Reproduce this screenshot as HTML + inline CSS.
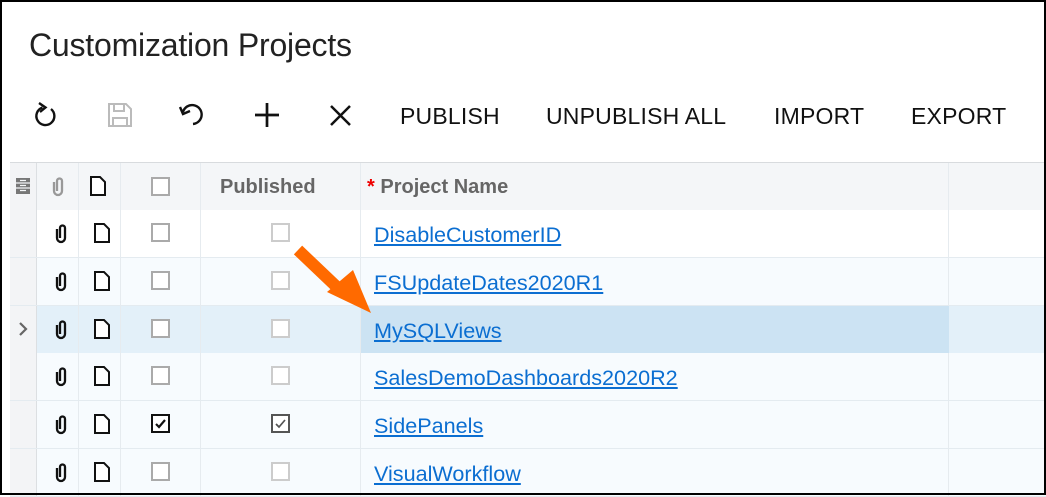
<!DOCTYPE html>
<html><head><style>
body{margin:0;width:1046px;height:495px;overflow:hidden;background:#fff;font-family:"Liberation Sans",sans-serif;position:relative}
.frame{position:absolute;left:0;top:0;width:1042px;height:491px;border:2px solid #000;z-index:5;pointer-events:none}
h1{position:absolute;left:29px;top:27px;margin:0;font-weight:normal;font-size:32px;color:#222;letter-spacing:-0.2px}
.tb{position:absolute;top:103px;font-size:23px;color:#111;letter-spacing:0.2px}
.ic{position:absolute;top:100px}
.grid{position:absolute;left:10px;top:162px;width:1036px}
.row{position:absolute;left:0;width:1036px;height:47px;border-bottom:1px solid #e4ebf0;background:#f7fbfe}
.hdr{background:#f4f6f8;border-top:1px solid #d8dbde;border-bottom:1px solid #d8dbde;height:47px}
.vl{position:absolute;top:0;width:1px;height:100%;background:#e6ebef}
.cb{position:absolute;width:19px;height:19px;border:2px solid #aaa;box-sizing:border-box;background:#fff}
a{position:absolute;left:364px;top:12px;font-size:21.6px;color:#0b6ed1;text-decoration:underline}
.lg{position:absolute;left:0;top:0;width:26px;height:100%;background:#f3f4f6;border-right:1px solid #dcdfe2}
</style></head><body>
<div class="frame"></div>
<h1>Customization Projects</h1>
<svg class="ic" style="left:33px" width="28" height="30" viewBox="0 0 28 30"><path d="M18 9 A9 9 0 1 1 9.5 7.5" fill="none" stroke="#111" stroke-width="2.4"/><path d="M6 3 L12.5 7.5 L7 12" fill="none" stroke="#111" stroke-width="2.4"/></svg>
<svg class="ic" style="left:106px" width="28" height="30" viewBox="0 0 28 30"><path d="M3 4h17l5 5v17H3z M8 4v7h10V4 M7 26v-8h14v8" fill="none" stroke="#bbb" stroke-width="2"/></svg>
<svg class="ic" style="left:178px" width="32" height="30" viewBox="0 0 32 30"><path d="M5 12 A9.5 9.5 0 1 1 15 24" fill="none" stroke="#111" stroke-width="2.4"/><path d="M2 7 L5 14 L12 11" fill="none" stroke="#111" stroke-width="2.4"/></svg>
<svg class="ic" style="left:252px" width="30" height="30" viewBox="0 0 30 30"><path d="M15 3v24M3 15h24" stroke="#111" stroke-width="2.7"/></svg>
<svg class="ic" style="left:327px" width="28" height="30" viewBox="0 0 28 30"><path d="M4 6l19 19M23 6L4 25" stroke="#111" stroke-width="2.5"/></svg>
<div class="tb" style="left:400px">PUBLISH</div>
<div class="tb" style="left:546px">UNPUBLISH ALL</div>
<div class="tb" style="left:774px">IMPORT</div>
<div class="tb" style="left:911px">EXPORT</div>
<div class="grid" id="g"></div>
<svg style="position:absolute;left:0;top:0" width="1046" height="495"><path d="M298 250 L340 290" stroke="#ff6a00" stroke-width="12"/><polygon points="353,270 371,313 327,292" fill="#ff6a00"/></svg>
<script>
var g=document.getElementById('g');
var clip='<svg width="16" height="22" viewBox="0 0 16 22" style="position:absolute;left:LEFTpx;top:13px"><path d="M4 6v9a4 4 0 0 0 8 0V5a2.5 2.5 0 0 0-5 0v10" fill="none" stroke="COL" stroke-width="2.3"/></svg>';
var doc='<svg width="18" height="22" viewBox="0 0 18 22" style="position:absolute;left:LEFTpx;top:12px"><path d="M2 2h9l5 5v13H2z" fill="#fff" stroke="#111" stroke-width="2"/></svg>';
var lines=[36,78,120,200,360,948].map(function(x){return '<div class="vl" style="left:'+(x-10)+'px"></div>'}).join('');
var h='<div class="row hdr" style="top:0">'+lines.replace(/#e6ebef/g,'#d8dbde')+
'<div class="lg"><svg width="16" height="18" viewBox="0 0 16 18" style="position:absolute;left:5px;top:14px"><rect x="1" y="1" width="14" height="16" fill="#777"/><path d="M1 6h14M1 11h14M5 3.5h6M5 8.5h6M5 13.5h6" stroke="#f4f6f8" stroke-width="1.3"/></svg></div>'+
clip.replace('COL','#999').replace('LEFT','40')+doc.replace('LEFT','79')+
'<div class="cb" style="left:141px;top:14px"></div>'+
'<div style="position:absolute;left:210px;top:13px;font-size:20px;font-weight:bold;color:#666">Published</div>'+
'<div style="position:absolute;left:357px;top:13px;font-size:20px;font-weight:bold;color:#666"><span style="color:#e00">*</span> Project Name</div></div>';
var names=['DisableCustomerID','FSUpdateDates2020R1','MySQLViews','SalesDemoDashboards2020R2','SidePanels','VisualWorkflow'];
names.forEach(function(n,i){
 var top=48+i*47.8, sel=i==2, chk=i==4;
 var bg=i==0?'#fff':(sel?'#e3f0f9':'#f7fbfe');
 h+='<div class="row" style="top:'+top+'px;background:'+bg+'">'+lines+
 '<div class="lg">'+(sel?'<svg width="12" height="16" style="position:absolute;left:7px;top:15px"><path d="M3 2l6 6-6 6" fill="none" stroke="#666" stroke-width="2.2"/></svg>':'')+'</div>'+
 (sel?'<div style="position:absolute;left:351px;top:0;width:588px;height:47px;background:#cce3f3"></div>':'')+
 clip.replace('COL','#111').replace('LEFT','43')+doc.replace('LEFT','83')+
 '<div class="cb" style="left:141px;top:13px;'+(chk?'border-color:#111':'')+'">'+(chk?'<svg width="15" height="15" style="position:absolute;left:0;top:0"><path d="M3 8l3 3 6-7" fill="none" stroke="#111" stroke-width="2.2"/></svg>':'')+'</div>'+
 '<div class="cb" style="left:261px;top:13px;border-color:'+(chk?'#555':'#ccc')+'">'+(chk?'<svg width="15" height="15" style="position:absolute;left:0;top:0"><path d="M3 8l3 3 6-7" fill="none" stroke="#555" stroke-width="1.7"/></svg>':'')+'</div>'+
 '<a>'+n+'</a></div>';
});
g.innerHTML=h;
</script>
</body></html>
